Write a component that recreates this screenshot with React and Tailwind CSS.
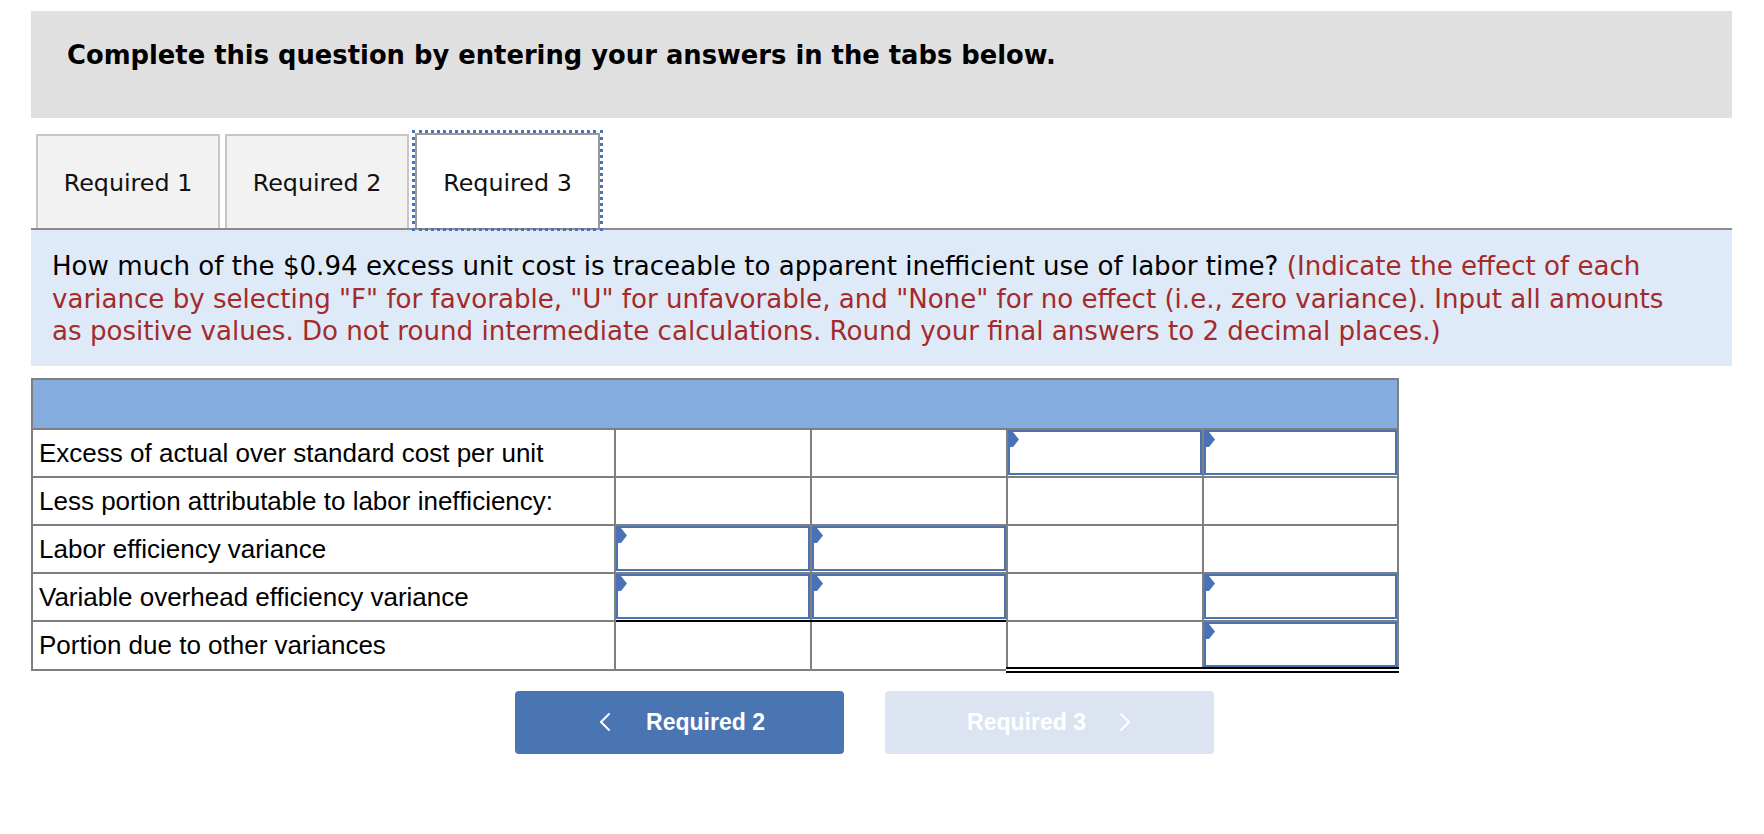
import React from 'react';

const rows = [
  { label: 'Excess of actual over standard cost per unit', inputs: [false, false, true, true] },
  { label: 'Less portion attributable to labor inefficiency:', inputs: [false, false, false, false] },
  { label: 'Labor efficiency variance', inputs: [true, true, false, false] },
  { label: 'Variable overhead efficiency variance', inputs: [true, true, false, true], rule: 'black' },
  { label: 'Portion due to other variances', inputs: [false, false, false, true], total: true },
];

const Flag = () => (
  <svg className="absolute left-0 top-0" width="9" height="15" viewBox="0 0 9 15">
    <polygon points="0,0 3,0 9,7.5 3,15 0,15" fill="#4a72b4" />
  </svg>
);

const InputBox = () => (
  <div className="relative h-[45px] w-full border-2 border-[#4a72b4] bg-white">
    <Flag />
  </div>
);

const Chevron = ({ dir }) => (
  <svg width="13" height="20" viewBox="0 0 13 20" fill="none">
    <polyline
      points={dir === 'left' ? '11,2 3,10 11,18' : '2,2 10,10 2,18'}
      stroke="#ffffff"
      strokeWidth="2"
      strokeLinecap="round"
      strokeLinejoin="round"
    />
  </svg>
);

const App = () => {
  return (
    <div className="min-h-screen bg-white">
      <div className="ml-[31px] w-[1701px] pt-[11px]">
        <div className="h-[107px] bg-[#e0e0e0] pl-[36px] pt-[29px]">
          <h2 className="font-['DejaVu_Sans',sans-serif] text-[25.8px] font-bold leading-[30px] text-black">
            Complete this question by entering your answers in the tabs below.
          </h2>
        </div>

        <div className="mt-[15px] flex items-end pl-[5px]">
          <div className="flex h-[94px] w-[184px] items-center justify-center border-2 border-b-0 border-[#c6c6c6] bg-[#f2f2f2] pt-[4px] font-['DejaVu_Sans',sans-serif] text-[23.8px] text-[#111]">
            Required 1
          </div>
          <div className="ml-[5px] flex h-[94px] w-[184px] items-center justify-center border-2 border-b-0 border-[#c6c6c6] bg-[#f2f2f2] pt-[4px] font-['DejaVu_Sans',sans-serif] text-[23.8px] text-[#111]">
            Required 2
          </div>
          <div className="relative z-10 ml-[6px] flex h-[95px] w-[185px] items-center justify-center border-2 border-b-0 border-[#9a9a9a] bg-white pt-[4px] font-['DejaVu_Sans',sans-serif] text-[23.8px] text-[#111] outline-[3px] outline-dotted outline-[#4a72b4]">
            Required 3
          </div>
        </div>

        <div className="border-t-2 border-[#8a8a8a] bg-[#deeaf7] pb-[18px] pl-[21px] pr-[50px] pt-[20px] font-['DejaVu_Sans',sans-serif] text-[26.1px] leading-[32.5px] text-black">
          How much of the $0.94 excess unit cost is traceable to apparent inefficient use of labor time?{' '}
          <span className="text-[#a52a2a]">
            (Indicate the effect of each variance by selecting "F" for favorable, "U" for unfavorable, and "None" for no effect (i.e., zero variance). Input all amounts as positive values. Do not round intermediate calculations. Round your final answers to 2 decimal places.)
          </span>
        </div>

        <table className="mt-[12px] w-[1366px] table-fixed border-collapse font-['Liberation_Sans',Arial,sans-serif] text-[26px] text-black">
          <colgroup>
            <col className="w-[583px]" />
            <col className="w-[196px]" />
            <col className="w-[196px]" />
            <col className="w-[196px]" />
            <col className="w-[195px]" />
          </colgroup>
          <tbody>
            <tr>
              <td colSpan={5} className="h-[50px] border-2 border-[#7f7f7f] bg-[#84acdf]" />
            </tr>
            {rows.map((row) => (
              <tr key={row.label}>
                <td className="h-[48px] border-2 border-[#7f7f7f] py-0 pl-[6px] leading-[30px]">{row.label}</td>
                {row.inputs.map((hasInput, i) => (
                  <td
                    key={i}
                    className={`h-[48px] p-0 align-top ${
                      row.rule === 'black'
                        ? 'border-2 border-[#7f7f7f] border-b-black'
                        : row.total && i >= 2
                        ? 'border-2 border-b-[6px] border-[#7f7f7f] border-b-black border-double'
                        : 'border-2 border-[#7f7f7f]'
                    }`}
                  >
                    {hasInput ? <InputBox /> : null}
                  </td>
                ))}
              </tr>
            ))}
          </tbody>
        </table>

        <div className="mt-[18px] flex gap-[41px] pl-[484px] font-['Liberation_Sans',Arial,sans-serif]">
          <button className="flex h-[63px] w-[329px] items-center justify-center gap-[35px] rounded-[4px] bg-[#4a75b3] pl-[4px] text-[23px] font-bold text-white">
            <Chevron dir="left" />
            <span>Required 2</span>
          </button>
          <button className="flex h-[63px] w-[329px] items-center justify-center gap-[33px] rounded-[4px] bg-[#dbe4f0] text-[23px] font-bold text-white">
            <span>Required 3</span>
            <Chevron dir="right" />
          </button>
        </div>
      </div>
    </div>
  );
};

export default App;
